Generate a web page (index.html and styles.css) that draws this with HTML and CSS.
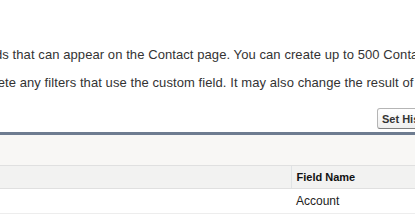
FILE: index.html
```
<!DOCTYPE html>
<html lang="en">
<head>
  <meta charset="UTF-8">
  <title>Contact Fields</title>
  <link rel="stylesheet" href="styles.css">
</head>
<body>
  <div class="page">
    <div class="intro">
      <p>This page allows you to specify the fields that can appear on the Contact page. You can create up to 500 Contact custom fields.</p>
      <p class="note">Note that deleting a custom field will delete any filters that use the custom field. It may also change the result of Assignment Rules or Escalation Rules that rely on custom field data.</p>
    </div>

    <div class="btn-row">
      <button class="btn">Set History Tracking</button>
    </div>

    <div class="block">
      <div class="block-header"></div>
      <table class="list">
        <tr class="head-row">
          <th class="col-action">Action</th>
          <th class="col-label">Field Label</th>
          <th class="col-name">Field Name</th>
        </tr>
        <tr class="data-row">
          <td class="col-action"></td>
          <td class="col-label"></td>
          <td class="col-name">Account</td>
        </tr>
      </table>
    </div>
  </div>
</body>
</html>
```

FILE: styles.css
```
* {
  margin: 0;
  padding: 0;
  box-sizing: border-box;
}

html, body {
  width: 100%;
  height: 100%;
  overflow: hidden;
  background: #fff;
  font-family: "Liberation Sans", Arial, sans-serif;
  color: #333;
}

.page {
  width: 1200px;
  margin-left: -240px;
}

.intro {
  padding-top: 47px;
  padding-left: 10px;
}

.intro p {
  font-size: 13px;
  line-height: 15px;
  letter-spacing: 0.08px;
  white-space: nowrap;
  margin-bottom: 13px;
}

.intro .note {
  text-indent: -4px;
}

.btn-row {
  margin-top: 18px;
  padding-left: 617px;
  height: 21px;
}

.btn {
  height: 21px;
  padding: 0 4px;
  font-family: "Liberation Sans", Arial, sans-serif;
  font-size: 11px;
  font-weight: bold;
  color: #333;
  background: linear-gradient(to bottom, #fff, #efefef);
  border: 1px solid #b5b5b5;
  border-bottom-color: #7f7f7f;
  border-radius: 3px;
}

.block {
  margin-top: 3px;
  border-top: 3px solid #6e7c90;
}

.block-header {
  height: 30px;
  background: #f8f7f5;
}

.list {
  width: 100%;
  border-collapse: collapse;
}

.list th,
.list td {
  text-align: left;
  padding: 0 5px;
  white-space: nowrap;
}

.head-row th {
  height: 23px;
  background: #f2f2f1;
  border-top: 1px solid #e0e0e0;
  border-bottom: 1px solid #e0e0e0;
  font-size: 11px;
  font-weight: bold;
  color: #111;
}

.head-row th + th {
  border-left: 1px solid #e0e3e5;
}

.data-row td {
  height: 25px;
  font-size: 12px;
  color: #222;
  border-bottom: 1px solid #ededed;
}

.col-action {
  width: 90px;
}

.col-label {
  width: 441px;
}

.head-row .col-action,
.head-row .col-label {
  color: transparent;
}
```
